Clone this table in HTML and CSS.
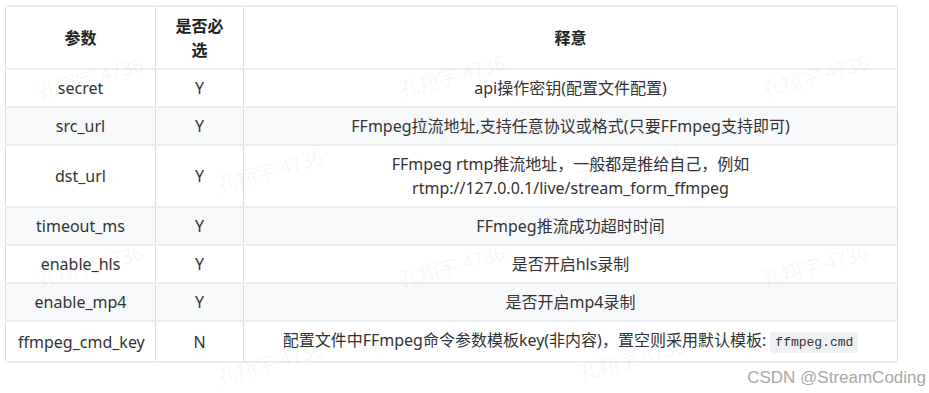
FILE: index.html
```html
<!DOCTYPE html>
<html lang="zh">
<head>
<meta charset="utf-8">
<title>参数</title>
<link rel="stylesheet" href="styles.css">
</head>
<body>
<div class="page">
  <table class="params">
    <colgroup>
      <col class="c1">
      <col class="c2">
      <col class="c3">
    </colgroup>
    <thead>
      <tr><th>参数</th><th>是否必选</th><th>释意</th></tr>
    </thead>
    <tbody>
      <tr><td>secret</td><td>Y</td><td>api操作密钥(配置文件配置)</td></tr>
      <tr><td>src_url</td><td>Y</td><td>FFmpeg拉流地址,支持任意协议或格式(只要FFmpeg支持即可)</td></tr>
      <tr><td>dst_url</td><td>Y</td><td>FFmpeg rtmp推流地址，一般都是推给自己，例如<br>rtmp://127.0.0.1/live/stream_form_ffmpeg</td></tr>
      <tr><td>timeout_ms</td><td>Y</td><td>FFmpeg推流成功超时时间</td></tr>
      <tr><td>enable_hls</td><td>Y</td><td>是否开启hls录制</td></tr>
      <tr><td>enable_mp4</td><td>Y</td><td>是否开启mp4录制</td></tr>
      <tr><td>ffmpeg_cmd_key</td><td>N</td><td>配置文件中FFmpeg命令参数模板key(非内容)，置空则采用默认模板: <code class="chip">ffmpeg.cmd</code></td></tr>
    </tbody>
  </table>
  <div class="credit">CSDN @StreamCoding</div>

  <span class="wm wm1">孔翔宇 4736</span>
  <span class="wm wm2">孔翔宇 4736</span>
  <span class="wm wm3">孔翔宇 4736</span>
  <span class="wm wm4">孔翔宇 4736</span>
  <span class="wm wm5">孔翔宇 4736</span>
  <span class="wm wm6">孔翔宇 4736</span>
  <span class="wm wm7">孔翔宇 4736</span>
  <span class="wm wm8">孔翔宇 4736</span>
  <span class="wm wm9">孔翔宇 4736</span>
  <span class="wm wm10">孔翔宇 4736</span>
</div>
</body>
</html>
```
FILE: styles.css
```css
* { box-sizing: border-box; }
html, body {
  margin: 0;
  background: #ffffff;
}
body {
  font-family: "Noto Sans", "Noto Sans CJK SC", sans-serif;
  color: #333333;
}
.page {
  position: relative;
  width: 929px;
  height: 393px;
  padding: 5px 0 0 5px;
  overflow: hidden;
}
.params {
  width: 892px;
  table-layout: fixed;
  border-collapse: collapse;
  font-size: 16px;
  line-height: 24px;
  border: 1px solid #dfe3e8;
}
.c1 { width: 150px; }
.c2 { width: 88px; }
.c3 { width: 654px; }
.params th,
.params td {
  text-align: center;
  padding: 6px 12px;
  border-left: 1px solid #dadee4;
  border-right: 1px solid #dadee4;
  border-top: 2px solid #eaedf1;
  border-bottom: 2px solid #eaedf1;
}
.params th {
  font-weight: 700;
  color: #222222;
  background: #ffffff;
  height: 63px;
}
.params tbody tr { background: #ffffff; }
.params tbody tr:nth-child(even) { background: #f6f8fa; }
.chip {
  font-family: "Liberation Mono", monospace;
  font-size: 13px;
  background: #eff1f3;
  border-radius: 4px;
  padding: 3px 5px;
  color: #333333;
}
.credit {
  position: absolute;
  right: 3px;
  bottom: 5px;
  font-family: "Liberation Sans", Arial, sans-serif;
  font-size: 17px;
  color: #a8a8a8;
}
.wm {
  position: absolute;
  font-family: "Noto Sans CJK SC", "Noto Sans", sans-serif;
  font-size: 20px;
  color: rgba(0, 0, 0, 0.055);
  transform: translate(-50%, -50%) rotate(-15deg);
  white-space: nowrap;
  pointer-events: none;
}
.wm1 { left: 90px; top: 77px; }
.wm2 { left: 452px; top: 75px; }
.wm3 { left: 815px; top: 75px; }
.wm4 { left: 270px; top: 170px; }
.wm5 { left: 632px; top: 165px; }
.wm6 { left: 90px; top: 265px; }
.wm7 { left: 452px; top: 265px; }
.wm8 { left: 815px; top: 265px; }
.wm9 { left: 270px; top: 362px; }
.wm10 { left: 632px; top: 358px; }
```
